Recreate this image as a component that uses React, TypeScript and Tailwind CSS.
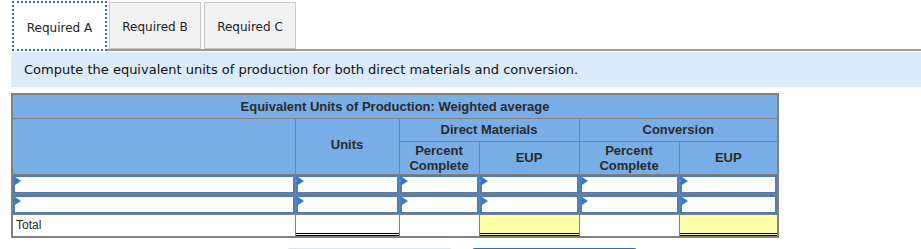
const Arrow = () => (
  <span className="absolute left-0 top-0 w-0 h-0 border-t-[4px] border-b-[4px] border-l-[6px] border-t-transparent border-b-transparent border-l-[#3a78c0]" />
);

const InputCell = () => (
  <td className="p-0 border border-[#808080]">
    <div className="relative h-[19px] border-2 border-[#4a7ebb] bg-white">
      <Arrow />
    </div>
  </td>
);

const TotalCell = ({ yellow, dbl }: { yellow?: boolean; dbl?: boolean }) => (
  <td className={`p-0 border border-[#808080] ${yellow ? "bg-[#ffffa8]" : "bg-white"}`}>
    <div className={`h-[21px] ${dbl ? "border-b-[3px] border-double border-black" : ""}`} />
  </td>
);

export default function App() {
  const th = "border border-[#808080] font-bold text-[#2a2a2a] text-[13px] leading-[15px] text-center";
  return (
    <div className="w-[921px] h-[249px] overflow-hidden bg-white font-['Liberation_Sans',Arial,sans-serif]">
      {/* tabs */}
      <div className="flex items-end h-[51px] pl-[12px] pt-[1px] font-['DejaVu_Sans',Verdana,sans-serif] text-[12px] text-[#222]">
        <div className="w-[95px] h-[50px] flex items-center justify-center pt-[3px] bg-white border-2 border-dotted border-[#3a6fb8]">
          Required A
        </div>
        <div className="flex-1 flex items-end gap-[3px] pl-[2px] border-b-2 border-[#9a9a9a]">
          <div className="w-[92px] h-[47px] flex items-center justify-center pt-[2px] bg-[#f2f2f2] border border-[#c8c8c8]">
            Required B
          </div>
          <div className="w-[92px] h-[47px] flex items-center justify-center pt-[2px] bg-[#f2f2f2] border border-[#c8c8c8]">
            Required C
          </div>
        </div>
      </div>

      <div className="ml-[11px] mt-[1px] h-[35px] flex items-center pl-[13px] pt-[1px] bg-[#dcebf9] font-['DejaVu_Sans',Verdana,sans-serif] text-[13px] text-[#111]">
        Compute the equivalent units of production for both direct materials and conversion.
      </div>

      <table className="ml-[11px] mt-[6px] w-[766px] border-collapse border-2 border-[#808080] table-fixed">
        <colgroup>
          <col className="w-[283px]" />
          <col className="w-[104px]" />
          <col className="w-[80px]" />
          <col className="w-[100px]" />
          <col className="w-[100px]" />
          <col className="w-[99px]" />
        </colgroup>
        <thead className="bg-[#78ade6]">
          <tr className="h-[24px]">
            <th colSpan={6} className={th}>Equivalent Units of Production: Weighted average</th>
          </tr>
          <tr className="h-[23px]">
            <th rowSpan={2} className={th}></th>
            <th rowSpan={2} className={`${th} pb-[4px]`}>Units</th>
            <th colSpan={2} className={th}>Direct Materials</th>
            <th colSpan={2} className={th}>Conversion</th>
          </tr>
          <tr className="h-[33px]">
            <th className={th}>Percent<br />Complete</th>
            <th className={th}>EUP</th>
            <th className={th}>Percent<br />Complete</th>
            <th className={th}>EUP</th>
          </tr>
        </thead>
        <tbody>
          {[0, 1].map((r) => (
            <tr key={r}>
              {[0, 1, 2, 3, 4, 5].map((i) => (
                <InputCell key={i} />
              ))}
            </tr>
          ))}
          <tr>
            <td className="p-0 border border-[#808080] bg-white text-[12px] text-[#222] pl-[3px]">Total</td>
            <TotalCell dbl />
            <TotalCell />
            <TotalCell yellow dbl />
            <TotalCell />
            <TotalCell yellow dbl />
          </tr>
        </tbody>
      </table>

      <div className="flex gap-[20px] mt-[10px] ml-[287px]">
        <div className="w-[165px] h-[10px] rounded-t-[3px] bg-[#d9e6f3]" />
        <div className="w-[165px] h-[10px] rounded-t-[3px] bg-[#3470b0]" />
      </div>
    </div>
  );
}
